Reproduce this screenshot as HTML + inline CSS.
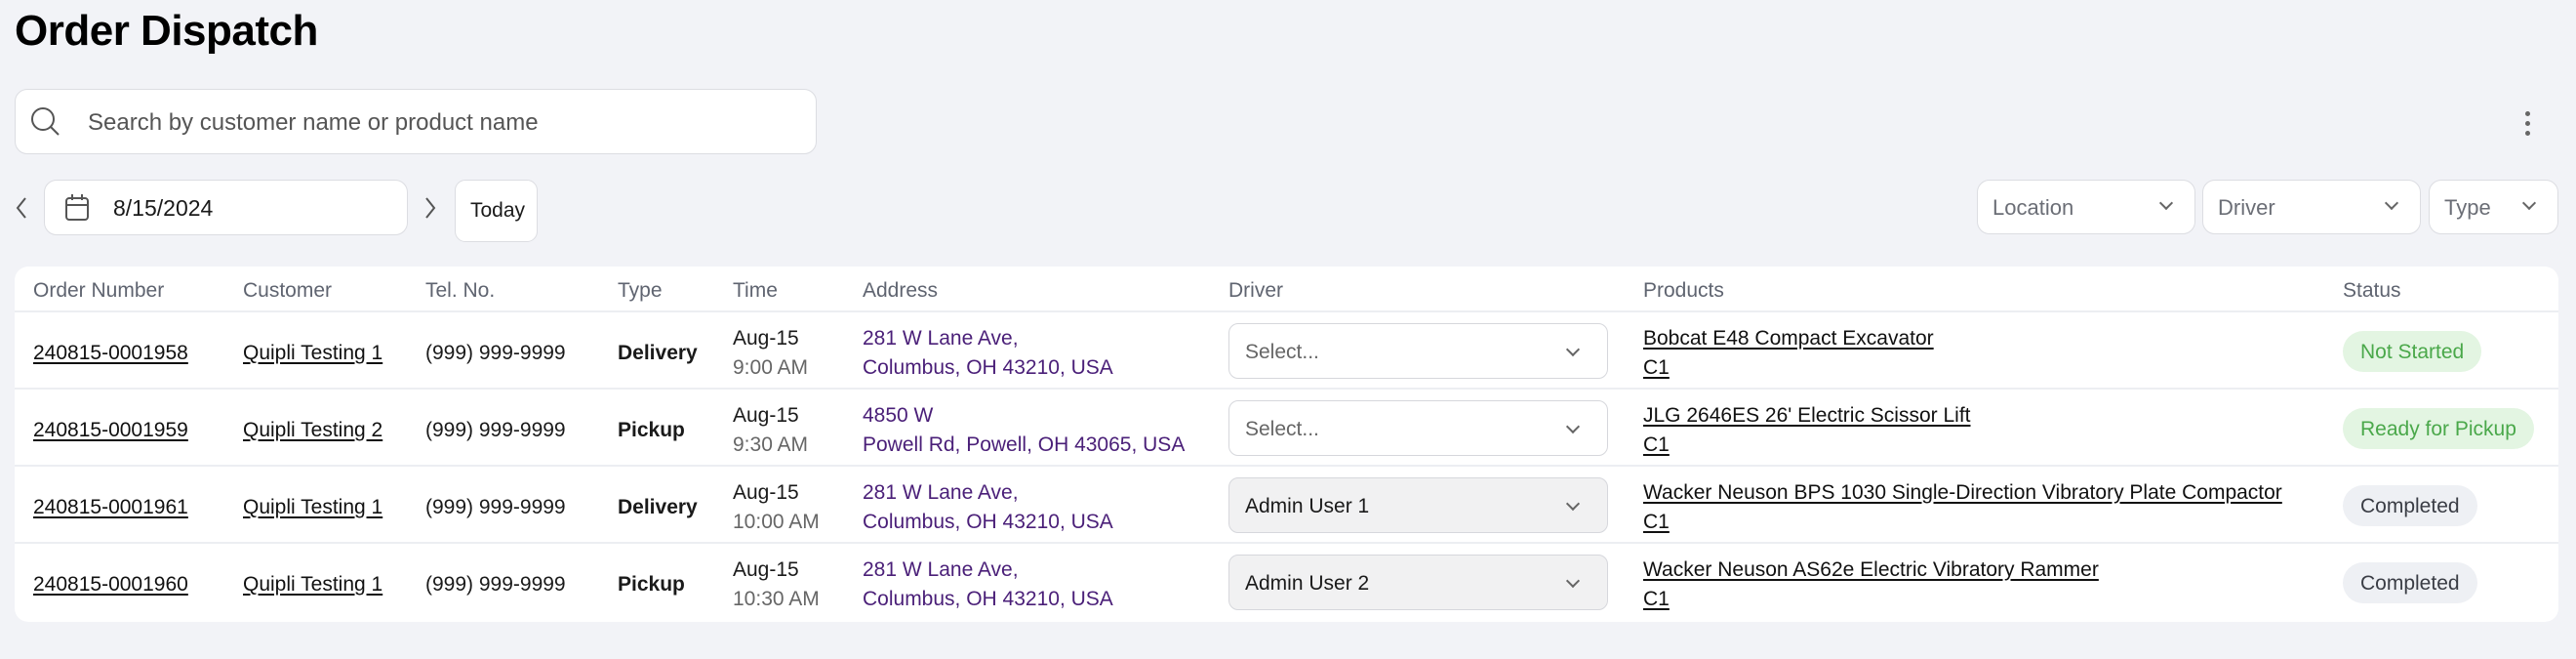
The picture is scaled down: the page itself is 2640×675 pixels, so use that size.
<!DOCTYPE html>
<html><head><meta charset="utf-8"><style>
*{box-sizing:border-box;margin:0;padding:0}
body{width:2640px;height:675px;background:#f2f3f7;font-family:"Liberation Sans",sans-serif;color:#1a1a1a;position:relative;overflow:hidden}
.a{position:absolute}
h1{position:absolute;left:15px;top:7px;font-size:44px;font-weight:700;color:#000;letter-spacing:-0.5px}
.box{position:absolute;background:#fff;border:1.5px solid #dcdde2;border-radius:13px}
.ph{color:#555;font-size:24px}
.card{position:absolute;left:15px;top:273px;width:2607px;height:364px;background:#fff;border-radius:14px;overflow:hidden}
.hdr{position:absolute;top:0;height:47px;width:100%;border-bottom:2px solid #eceef2}
.hdr span{position:absolute;top:13px;font-size:21px;color:#5f6470}
.row{position:absolute;left:0;width:100%;height:79px;border-bottom:2px solid #eceef2}
.row .c{position:absolute;font-size:21px;top:30px}
.u{text-decoration:underline;text-underline-offset:3px;color:#111}
.t2{position:absolute;font-size:21px;line-height:30px;top:12px}
.sel{position:absolute;left:1244px;top:11px;width:389px;height:57px;border:1.5px solid #d6d7dc;border-radius:10px;font-size:21px;padding:17px 0 0 16px;color:#666}
.sel.f{background:#f1f1f2;color:#1a1a1a}
.sel:after{content:"";position:absolute;right:30px;top:21px;width:8px;height:8px;border-right:2px solid #666;border-bottom:2px solid #666;transform:rotate(45deg)}
.pill{position:absolute;left:2386px;top:19px;height:42px;border-radius:21px;font-size:21px;padding:10px 18px 0}
.g{background:#e3f5e2;color:#4aa84a}
.gr{background:#eef0f4;color:#3a3d45}
.pur{color:#4a1f78}
.flt{position:absolute;top:184px;height:56px;background:#fff;border:1.5px solid #dcdde2;border-radius:13px;font-size:22px;color:#6b6e76;padding:15px 0 0 15px}
.flt:after{content:"";position:absolute;right:24px;top:18px;width:8px;height:8px;border-right:2px solid #666;border-bottom:2px solid #666;transform:rotate(45deg)}
</style></head><body>
<h1>Order Dispatch</h1>
<div class="box" style="left:15px;top:91px;width:822px;height:67px"></div>
<svg class="a" style="left:30px;top:108px" width="34" height="34" viewBox="0 0 34 34"><circle cx="14" cy="14" r="11" fill="none" stroke="#555" stroke-width="2"/><line x1="22" y1="22" x2="30" y2="30" stroke="#555" stroke-width="2"/></svg>
<div class="a ph" style="left:90px;top:112px;color:#555">Search by customer name or product name</div>
<div class="a" style="left:2588px;top:114px;width:5px;height:5px;border-radius:3px;background:#666;box-shadow:0 10px 0 #666,0 20px 0 #666"></div>
<svg class="a" style="left:14px;top:200px" width="16" height="26"><polyline points="12,3 4,13 12,23" fill="none" stroke="#555" stroke-width="2"/></svg>
<div class="box" style="left:45px;top:184px;width:373px;height:57px"></div>
<svg class="a" style="left:66px;top:198px" width="26" height="30" viewBox="0 0 26 30"><rect x="2" y="5" width="22" height="22" rx="3" fill="none" stroke="#555" stroke-width="2"/><line x1="2" y1="12" x2="24" y2="12" stroke="#555" stroke-width="2"/><line x1="8" y1="1" x2="8" y2="7" stroke="#555" stroke-width="2"/><line x1="18" y1="1" x2="18" y2="7" stroke="#555" stroke-width="2"/></svg>
<div class="a" style="left:116px;top:200px;font-size:23px">8/15/2024</div>
<svg class="a" style="left:433px;top:200px" width="16" height="26"><polyline points="4,3 12,13 4,23" fill="none" stroke="#555" stroke-width="2"/></svg>
<div class="box" style="left:466px;top:184px;width:85px;height:64px;border-radius:11px"></div>
<div class="a" style="left:482px;top:204px;font-size:21px">Today</div>
<div class="flt" style="left:2026px;width:224px">Location</div>
<div class="flt" style="left:2257px;width:224px">Driver</div>
<div class="flt" style="left:2489px;width:133px">Type</div>
<div class="card">
<div class="hdr"><span style="left:19px">Order Number</span><span style="left:234px">Customer</span><span style="left:421px">Tel. No.</span><span style="left:618px">Type</span><span style="left:736px">Time</span><span style="left:869px">Address</span><span style="left:1244px">Driver</span><span style="left:1669px">Products</span><span style="left:2386px">Status</span></div>

<div class="row" style="top:47px">
<span class="c u" style="left:19px">240815-0001958</span><span class="c u" style="left:234px">Quipli Testing 1</span><span class="c" style="left:421px">(999) 999-9999</span><span class="c" style="left:618px;font-weight:700">Delivery</span>
<div class="t2" style="left:736px">Aug-15<br><span style="color:#666">9:00 AM</span></div>
<div class="t2 pur" style="left:869px">281 W Lane Ave,<br>Columbus, OH 43210, USA</div>
<div class="sel">Select...</div>
<div class="t2" style="left:1669px"><span class="u">Bobcat E48 Compact Excavator</span><br><span class="u">C1</span></div>
<div class="pill g">Not Started</div></div>

<div class="row" style="top:126px">
<span class="c u" style="left:19px">240815-0001959</span><span class="c u" style="left:234px">Quipli Testing 2</span><span class="c" style="left:421px">(999) 999-9999</span><span class="c" style="left:618px;font-weight:700">Pickup</span>
<div class="t2" style="left:736px">Aug-15<br><span style="color:#666">9:30 AM</span></div>
<div class="t2 pur" style="left:869px">4850 W<br>Powell Rd, Powell, OH 43065, USA</div>
<div class="sel">Select...</div>
<div class="t2" style="left:1669px"><span class="u">JLG 2646ES 26' Electric Scissor Lift</span><br><span class="u">C1</span></div>
<div class="pill g">Ready for Pickup</div></div>

<div class="row" style="top:205px">
<span class="c u" style="left:19px">240815-0001961</span><span class="c u" style="left:234px">Quipli Testing 1</span><span class="c" style="left:421px">(999) 999-9999</span><span class="c" style="left:618px;font-weight:700">Delivery</span>
<div class="t2" style="left:736px">Aug-15<br><span style="color:#666">10:00 AM</span></div>
<div class="t2 pur" style="left:869px">281 W Lane Ave,<br>Columbus, OH 43210, USA</div>
<div class="sel f">Admin User 1</div>
<div class="t2" style="left:1669px"><span class="u">Wacker Neuson BPS 1030 Single-Direction Vibratory Plate Compactor</span><br><span class="u">C1</span></div>
<div class="pill gr">Completed</div></div>

<div class="row" style="top:284px;border-bottom:none">
<span class="c u" style="left:19px">240815-0001960</span><span class="c u" style="left:234px">Quipli Testing 1</span><span class="c" style="left:421px">(999) 999-9999</span><span class="c" style="left:618px;font-weight:700">Pickup</span>
<div class="t2" style="left:736px">Aug-15<br><span style="color:#666">10:30 AM</span></div>
<div class="t2 pur" style="left:869px">281 W Lane Ave,<br>Columbus, OH 43210, USA</div>
<div class="sel f">Admin User 2</div>
<div class="t2" style="left:1669px"><span class="u">Wacker Neuson AS62e Electric Vibratory Rammer</span><br><span class="u">C1</span></div>
<div class="pill gr">Completed</div></div>
</div>
</body></html>
